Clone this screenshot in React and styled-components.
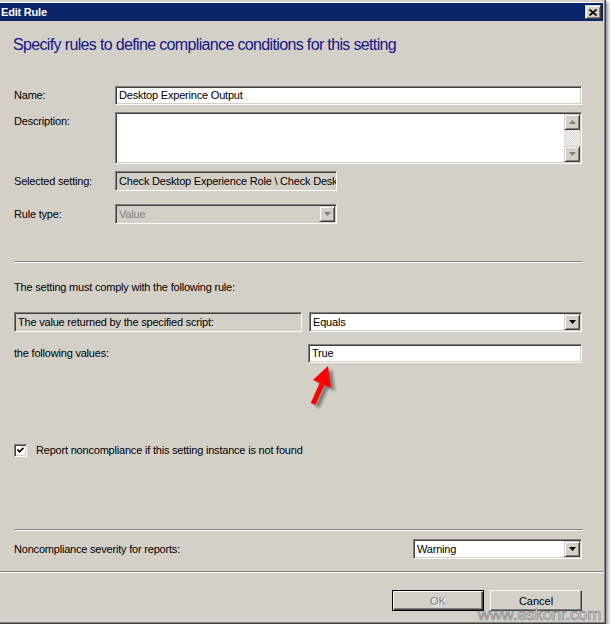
import styled, { createGlobalStyle, css } from "styled-components";

const GlobalStyle = createGlobalStyle`
  html, body {
    margin: 0;
    padding: 0;
    background: #fff;
  }
  body {
    font-family: "Liberation Sans", Arial, sans-serif;
    font-size: 11px;
    letter-spacing: -0.2px;
    color: #000;
  }
`;

const sunken = css`
  border: 1px solid;
  border-color: #808080 #fff #fff #808080;
  box-shadow: inset 1px 1px 0 #404040, inset -1px -1px 0 #d4d0c8;
`;

const raised = css`
  border: 1px solid;
  border-color: #d4d0c8 #404040 #404040 #d4d0c8;
  box-shadow: inset 1px 1px 0 #fff, inset -1px -1px 0 #808080;
`;

const Window = styled.div`
  position: relative;
  box-sizing: border-box;
  width: 606px;
  height: 624px;
  padding: 2px 2px 0 0;
  background: #d4d0c8;
  border-right: 1px solid #404040;
  border-bottom: 1px solid #404040;
  box-shadow: inset -1px -1px 0 #808080, 2px 2px 3px rgba(0, 0, 0, 0.45);
  display: flex;
  flex-direction: column;
`;

const TitleBar = styled.div`
  height: 18px;
  margin-top: 1px;
  box-shadow: 0 -1px 0 #fff;
  background: #0a246a;
  color: #fff;
  font-weight: bold;
  display: flex;
  align-items: center;
  justify-content: space-between;
  padding: 0 2px 0 1px;
`;

const CloseButton = styled.div`
  box-sizing: border-box;
  width: 16px;
  height: 14px;
  background: #d4d0c8;
  ${raised};
  display: flex;
  align-items: center;
  justify-content: center;
`;

const Content = styled.div`
  padding: 0 21px 0 14px;
`;

const Heading = styled.h1`
  margin: 14px 0 0 -1px;
  font-size: 16px;
  line-height: 20px;
  font-weight: normal;
  letter-spacing: -0.65px;
  color: #12168a;
`;

const FieldRow = styled.div`
  display: grid;
  grid-template-columns: 101px ${(p) => p.$field || "1fr"};
  align-items: start;
  margin-top: ${(p) => p.$mt}px;
`;

const Label = styled.div`
  line-height: ${(p) => p.$h || 19}px;
  white-space: nowrap;
`;

const TextBox = styled.div`
  box-sizing: border-box;
  height: ${(p) => p.$h || 19}px;
  width: ${(p) => p.$w || "auto"};
  ${sunken};
  background: ${(p) => (p.$disabled ? "#d4d0c8" : "#fff")};
  padding: 0 3px;
  line-height: ${(p) => (p.$h || 19) - 2}px;
  white-space: nowrap;
  overflow: hidden;
`;

const TextArea = styled.div`
  box-sizing: border-box;
  height: 52px;
  ${sunken};
  background: #fff;
  padding: 1px;
  display: flex;
  justify-content: flex-end;
`;

const ScrollBar = styled.div`
  width: 16px;
  display: flex;
  flex-direction: column;
`;

const ScrollTrack = styled.div`
  flex: 1;
  background-color: #fff;
  background-image: repeating-conic-gradient(#d4d0c8 0 25%, #fff 0 50%);
  background-size: 2px 2px;
`;

const ArrowButton = styled.div`
  box-sizing: border-box;
  width: 16px;
  height: 16px;
  background: #d4d0c8;
  ${raised};
  display: flex;
  align-items: center;
  justify-content: center;
`;

const Combo = styled.div`
  box-sizing: border-box;
  height: 20px;
  width: ${(p) => p.$w || "auto"};
  flex: ${(p) => (p.$w ? "none" : 1)};
  ${sunken};
  background: ${(p) => (p.$disabled ? "#d4d0c8" : "#fff")};
  color: ${(p) => (p.$disabled ? "#808080" : "#000")};
  padding: 1px;
  display: flex;
`;

const ComboText = styled.div`
  flex: 1;
  padding-left: 2px;
  line-height: 16px;
  white-space: nowrap;
  overflow: hidden;
`;

const Separator = styled.div`
  margin-top: ${(p) => p.$mt}px;
  border-top: 1px solid #808080;
  border-bottom: 1px solid #fff;
`;

const Text = styled.div`
  margin-top: ${(p) => p.$mt}px;
  line-height: 16px;
`;

const RuleRow = styled.div`
  display: flex;
  gap: 7px;
  margin-top: 17px;
`;

const ValuesRow = styled.div`
  display: grid;
  grid-template-columns: 294px 1fr;
  margin-top: 12px;
`;

const CheckRow = styled.label`
  display: flex;
  align-items: center;
  gap: 9px;
  margin-top: 81px;
  line-height: 13px;
`;

const CheckBox = styled.span`
  box-sizing: border-box;
  width: 13px;
  height: 13px;
  ${sunken};
  background: #fff;
  display: flex;
  align-items: center;
  justify-content: center;
`;

const SeverityRow = styled.div`
  display: flex;
  justify-content: space-between;
  margin-top: 8px;
`;

const Footer = styled.div`
  flex: 1;
  margin-top: 12px;
  border-top: 1px solid #808080;
  box-shadow: inset 0 1px 0 #fff;
  padding: 18px 21px 0 0;
  display: flex;
  justify-content: flex-end;
  align-items: flex-start;
  gap: 6px;
`;

const Button = styled.button`
  box-sizing: border-box;
  width: 92px;
  height: 21px;
  padding: 0;
  font: inherit;
  background: #d4d0c8;
  border: 1px solid;
  border-color: #fff #404040 #404040 #fff;
  box-shadow: inset -1px -1px 0 #808080;
  color: #000;
  ${(p) =>
    p.$default &&
    css`
      border-color: #000;
      box-shadow: inset 1px 1px 0 #fff, inset -1px -1px 0 #404040,
        inset -2px -2px 0 #808080;
    `}
  &:disabled {
    color: #808080;
    text-shadow: 1px 1px 0 #fff;
  }
`;

const Watermark = styled.div`
  position: absolute;
  right: 4px;
  top: 606px;
  font-size: 17px;
  line-height: 18px;
  letter-spacing: -0.3px;
  color: #d9d9d9;
  -webkit-text-stroke: 0.6px #7c7c7c;
  pointer-events: none;
`;

const Callout = styled.svg`
  position: absolute;
  left: 300px;
  top: 360px;
  pointer-events: none;
`;

const Triangle = ({ dir = "down", color = "#000" }) => (
  <svg width="7" height="4" viewBox="0 0 7 4">
    {dir === "down" ? (
      <polygon points="0,0 7,0 3.5,4" fill={color} />
    ) : (
      <polygon points="0,4 7,4 3.5,0" fill={color} />
    )}
  </svg>
);

const DropDown = ({ value, width, disabled }) => (
  <Combo $w={width} $disabled={disabled}>
    <ComboText>{value}</ComboText>
    <ArrowButton>
      <Triangle color={disabled ? "#808080" : "#000"} />
    </ArrowButton>
  </Combo>
);

export default function App() {
  return (
    <>
      <GlobalStyle />
      <Window>
        <TitleBar>
          <span>Edit Rule</span>
          <CloseButton>
            <svg width="8" height="7" viewBox="0 0 8 7">
              <path d="M0.5 0.5 L7.5 6.5 M7.5 0.5 L0.5 6.5" stroke="#000" strokeWidth="1.6" />
            </svg>
          </CloseButton>
        </TitleBar>

        <Content>
          <Heading>Specify rules to define compliance conditions for this setting</Heading>

          <FieldRow $mt={31}>
            <Label>Name:</Label>
            <TextBox>Desktop Experince Output</TextBox>
          </FieldRow>
          <FieldRow $mt={7}>
            <Label>Description:</Label>
            <TextArea>
              <ScrollBar>
                <ArrowButton>
                  <Triangle dir="up" color="#808080" />
                </ArrowButton>
                <ScrollTrack />
                <ArrowButton>
                  <Triangle color="#808080" />
                </ArrowButton>
              </ScrollBar>
            </TextArea>
          </FieldRow>
          <FieldRow $mt={7} $field="222px">
            <Label $h={20}>Selected setting:</Label>
            <TextBox $h={20} $disabled>
              Check Desktop Experience Role \ Check Desktop Experience
            </TextBox>
          </FieldRow>
          <FieldRow $mt={13} $field="222px">
            <Label $h={20}>Rule type:</Label>
            <DropDown value="Value" disabled />
          </FieldRow>

          <Separator $mt={37} />

          <Text $mt={16}>The setting must comply with the following rule:</Text>
          <RuleRow>
            <TextBox $h={20} $w="288px" $disabled>
              The value returned by the specified script:
            </TextBox>
            <DropDown value="Equals" />
          </RuleRow>
          <ValuesRow>
            <Label>the following values:</Label>
            <TextBox>True</TextBox>
          </ValuesRow>

          <CheckRow>
            <CheckBox>
              <svg width="7" height="7" viewBox="0 0 7 7">
                <path d="M0.5 2.5 L2.5 4.8 L6.5 0.8" stroke="#000" strokeWidth="1.7" fill="none" />
              </svg>
            </CheckBox>
            Report noncompliance if this setting instance is not found
          </CheckRow>

          <Separator $mt={72} />

          <SeverityRow>
            <Label $h={20}>Noncompliance severity for reports:</Label>
            <DropDown value="Warning" width="169px" />
          </SeverityRow>
        </Content>

        <Footer>
          <Button $default disabled>
            OK
          </Button>
          <Button>Cancel</Button>
        </Footer>

        <Watermark>www.eskonr.com</Watermark>

        <Callout width="45" height="55" viewBox="0 0 45 55">
          <defs>
            <filter id="blur" x="-50%" y="-50%" width="200%" height="200%">
              <feGaussianBlur stdDeviation="1.6" />
            </filter>
          </defs>
          <g fill="#555" stroke="#555" opacity="0.7" filter="url(#blur)" transform="translate(4 3)">
            <line x1="13" y1="44" x2="22" y2="24" strokeWidth="5" />
            <polygon points="28,6 13,20 31,28" stroke="none" />
          </g>
          <g fill="#ff0000" stroke="#ff0000">
            <line x1="13" y1="44" x2="22" y2="24" strokeWidth="5" />
            <polygon points="28,6 13,20 31,28" stroke="none" />
          </g>
        </Callout>
      </Window>
    </>
  );
}
